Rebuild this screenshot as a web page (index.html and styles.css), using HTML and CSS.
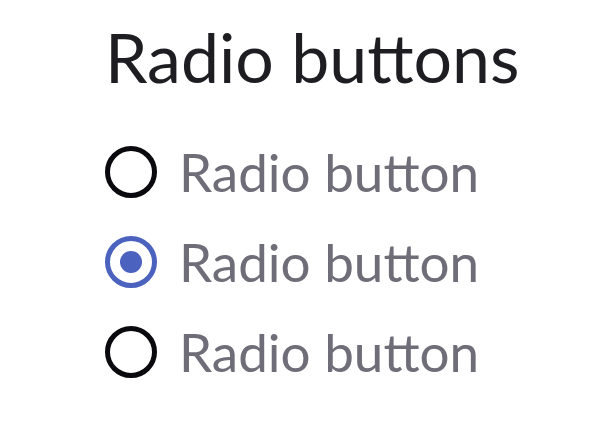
FILE: index.html
```html
<!DOCTYPE html>
<html lang="en">
<head>
    <meta charset="UTF-8">
    <title>Radio buttons</title>
    <link rel="stylesheet" href="styles.css">
</head>
<body>
    <div class="container">
        <h1>Radio buttons</h1>
        <div class="radio-group">
            <label class="radio">
                <input type="radio" name="choice">
                <span class="mark"></span>
                <span class="label">Radio button</span>
            </label>
            <label class="radio">
                <input type="radio" name="choice" checked>
                <span class="mark"></span>
                <span class="label">Radio button</span>
            </label>
            <label class="radio">
                <input type="radio" name="choice">
                <span class="mark"></span>
                <span class="label">Radio button</span>
            </label>
        </div>
    </div>
</body>
</html>
```

FILE: styles.css
```css
/* General styles */
body {
    font-family: Lato, "Open Sans", sans-serif;
    margin: 0;
    padding: 0;
    background-color: #fff;
}

.container {
    padding: 17px 0 0 105px;
}

h1 {
    margin: 0 0 46px 0;
    font-size: 68px;
    font-weight: normal;
    color: #1d1d22;
    line-height: 80px;
}

.radio-group {
    display: flex;
    flex-direction: column;
    gap: 32px;
}

.radio {
    display: flex;
    align-items: center;
    gap: 22px;
    cursor: pointer;
}

.radio input {
    display: none;
}

.mark {
    width: 42px;
    height: 42px;
    border: 5px solid #0a0a0e;
    border-radius: 50%;
    display: flex;
    align-items: center;
    justify-content: center;
}

.radio input:checked + .mark {
    border-color: #4b62be;
}

.radio input:checked + .mark::after {
    content: "";
    width: 22px;
    height: 22px;
    border-radius: 50%;
    background: #4b62be;
}

.label {
    font-size: 53px;
    line-height: 58px;
    color: #6e6d78;
}
```
